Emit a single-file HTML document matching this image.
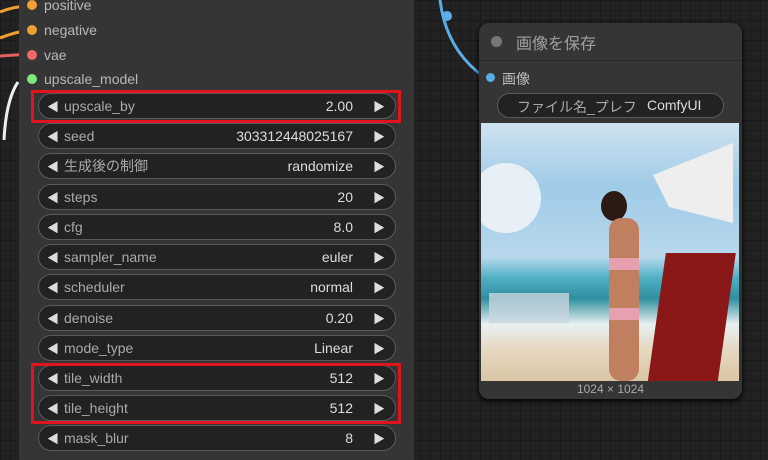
<!DOCTYPE html>
<html><head><meta charset="utf-8"><style>
*{margin:0;padding:0;box-sizing:border-box}
body{width:768px;height:455px;overflow:hidden;background-color:#222;
background-image:linear-gradient(#1a1a1a 1px,transparent 1px),linear-gradient(90deg,#1a1a1a 1px,transparent 1px);
background-size:10px 10px;font-family:"Liberation Sans","Noto Sans CJK JP",sans-serif;position:relative}
.node{position:absolute;left:19px;top:-10px;width:395px;height:470px;background:#353535}
.in{position:absolute;left:44px;color:#b8b8b8;font-size:14px}
.dot{position:absolute;left:27px;width:10px;height:10px;border-radius:50%}
.w{position:absolute;left:38px;width:358px;height:26px;background:#222;border:1px solid #5a5a5a;border-radius:13px;color:#c8c8c8;font-size:14px;line-height:17px}
.w .l{position:absolute;left:8px;top:5px;font-size:12px;color:#ddd}
.w .n{position:absolute;left:25px;top:4px;color:#aaa}
.w .v{position:absolute;right:42px;top:4px;color:#ddd}
.w .r{position:absolute;right:10px;top:5px;font-size:12px;color:#ddd}
.red{position:absolute;border:3px solid #e0141e}
.rn{position:absolute;left:479px;top:23px;width:263px;height:376px;background:#353535;border-radius:10px;box-shadow:0 2px 6px #000}
.title{height:38px;border-bottom:1px solid #2a2a2a;color:#a0a0a0;font-size:16px;padding:7px 0 0 37px;position:relative}
.img{position:absolute;left:2px;top:100px;width:258px;height:258px;overflow:hidden;
background:linear-gradient(#cfe2ef 0%,#9fcbe8 25%,#b8d8ec 52%,#50b0c4 60%,#2f8f9f 68%,#e8f0f2 78%,#e6d7c0 88%,#d9c6a6 100%)}
</style></head><body>
<svg width="768" height="455" style="position:absolute;left:0;top:0">
<path d="M0 12 Q15 6 30 6" stroke="#f0a030" stroke-width="3" fill="none"/>
<path d="M0 38 Q15 32 30 30" stroke="#f0a030" stroke-width="3" fill="none"/>
<path d="M0 56 L30 54" stroke="#e06060" stroke-width="3" fill="none"/>
<path d="M18 82 Q6 100 4 140" stroke="#eee" stroke-width="3" fill="none"/>
<path d="M440 0 Q445 40 470 65 Q480 75 488 78" stroke="#5aaee8" stroke-width="3" fill="none"/>
<circle cx="447" cy="16" r="5" fill="#5aaee8"/>
</svg>
<div class="node"></div>
<div class="dot" style="top:0;background:#f0a030"></div><div class="in" style="top:-3px">positive</div>
<div class="dot" style="top:25px;background:#f0a030"></div><div class="in" style="top:22px">negative</div>
<div class="dot" style="top:50px;background:#f06868"></div><div class="in" style="top:47px">vae</div>
<div class="dot" style="top:74px;background:#7ee87e"></div><div class="in" style="top:71px">upscale_model</div>

<div class="w" style="top:93px"><span class="l">◀</span><span class="n">upscale_by</span><span class="v">2.00</span><span class="r">▶</span></div>
<div class="w" style="top:123px"><span class="l">◀</span><span class="n">seed</span><span class="v">303312448025167</span><span class="r">▶</span></div>
<div class="w" style="top:153px"><span class="l">◀</span><span class="n">生成後の制御</span><span class="v">randomize</span><span class="r">▶</span></div>
<div class="w" style="top:184px"><span class="l">◀</span><span class="n">steps</span><span class="v">20</span><span class="r">▶</span></div>
<div class="w" style="top:214px"><span class="l">◀</span><span class="n">cfg</span><span class="v">8.0</span><span class="r">▶</span></div>
<div class="w" style="top:244px"><span class="l">◀</span><span class="n">sampler_name</span><span class="v">euler</span><span class="r">▶</span></div>
<div class="w" style="top:274px"><span class="l">◀</span><span class="n">scheduler</span><span class="v">normal</span><span class="r">▶</span></div>
<div class="w" style="top:305px"><span class="l">◀</span><span class="n">denoise</span><span class="v">0.20</span><span class="r">▶</span></div>
<div class="w" style="top:335px"><span class="l">◀</span><span class="n">mode_type</span><span class="v">Linear</span><span class="r">▶</span></div>
<div class="w" style="top:365px"><span class="l">◀</span><span class="n">tile_width</span><span class="v">512</span><span class="r">▶</span></div>
<div class="w" style="top:395px"><span class="l">◀</span><span class="n">tile_height</span><span class="v">512</span><span class="r">▶</span></div>
<div class="w" style="top:425px"><span class="l">◀</span><span class="n">mask_blur</span><span class="v">8</span><span class="r">▶</span></div>
<div class="red" style="left:31px;top:90px;width:370px;height:33px"></div>
<div class="red" style="left:31px;top:363px;width:370px;height:61px"></div>

<div class="rn">
<div class="title"><span style="position:absolute;left:12px;top:13px;width:11px;height:11px;border-radius:50%;background:#777"></span>画像を保存</div>
<span style="position:absolute;left:7px;top:50px;width:9px;height:9px;border-radius:50%;background:#5aaee8"></span>
<span style="position:absolute;left:23px;top:46px;color:#bbb;font-size:14px">画像</span>
<div style="position:absolute;left:18px;top:70px;width:227px;height:25px;border:1px solid #5a5a5a;border-radius:13px;background:#222;color:#aaa;font-size:14px;padding:3px 0 0 19px">ファイル名_プレフ<span style="position:absolute;left:149px;color:#ddd">ComfyUI</span></div>
<div class="img">
<div style="position:absolute;left:-10px;top:40px;width:70px;height:70px;border-radius:50%;background:#f2f6f8;opacity:.85"></div>
<div style="position:absolute;left:8px;top:170px;width:80px;height:30px;background:#c8d6de;opacity:.8"></div>
<div style="position:absolute;left:175px;top:130px;width:70px;height:140px;background:#8a1818;transform:skewX(-8deg)"></div>
<div style="position:absolute;left:172px;top:20px;width:80px;height:80px;background:#eee;clip-path:polygon(0 40%,100% 0,100% 100%,20% 80%)"></div>
<div style="position:absolute;left:120px;top:68px;width:26px;height:30px;border-radius:50%;background:#2a1a14"></div>
<div style="position:absolute;left:128px;top:95px;width:30px;height:163px;background:#c08060;border-radius:12px"></div>
<div style="position:absolute;left:128px;top:135px;width:30px;height:12px;background:#e8a0b0"></div>
<div style="position:absolute;left:128px;top:185px;width:30px;height:12px;background:#e8a0b0"></div>
</div>
<div style="position:absolute;left:0;top:359px;width:263px;text-align:center;color:#aaa;font-size:12px">1024 × 1024</div>
</div>
</body></html>
